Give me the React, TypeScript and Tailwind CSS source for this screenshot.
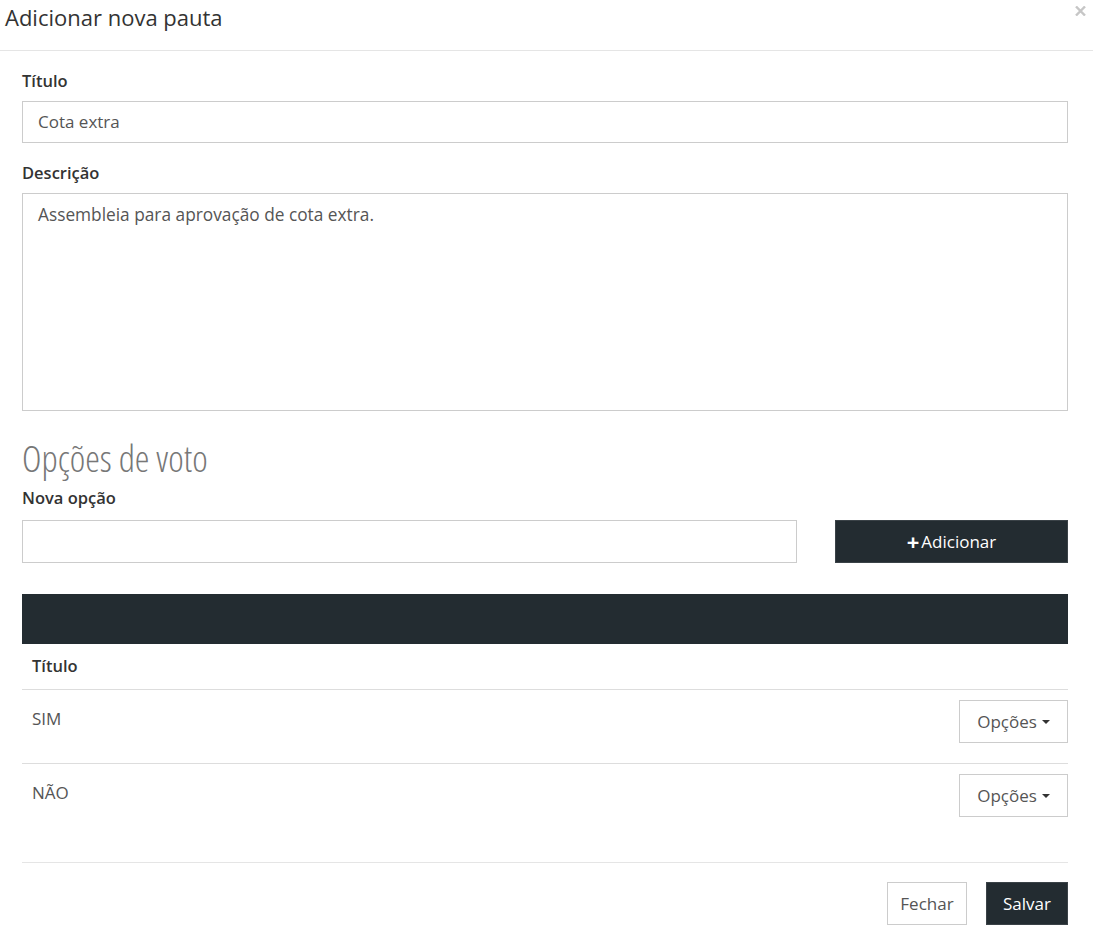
import React from "react";

const font = { fontFamily: '"Open Sans", "Noto Sans", sans-serif' };

function Caret() {
  return <span className="ml-[5px] inline-block w-0 h-0 border-l-[4px] border-r-[4px] border-t-[4px] border-l-transparent border-r-transparent border-t-[#333] align-middle" />;
}

export default function App() {
  return (
    <div className="w-[1093px] min-h-[932px] bg-white text-[#333]" style={font}>
      <div className="relative h-[51px] border-b border-[#e5e5e5] pl-[5px] pt-[2px]">
        <h4 className="text-[22px] leading-[30px] text-[#333] font-normal">Adicionar nova pauta</h4>
        <button aria-label="Fechar" className="absolute left-[1075px] top-[6px] w-[11px] h-[10px]">
          <svg width="11" height="10" viewBox="0 0 11 10" className="block">
            <path d="M1 0.5 L10 9.5 M10 0.5 L1 9.5" stroke="#c6c6c6" strokeWidth="2.4" strokeLinecap="butt" fill="none" />
          </svg>
        </button>
      </div>
      <div className="px-[22px] pr-[25px] pt-[20px]">
        <label className="block text-[16.5px] font-semibold leading-[20px] mb-[10px]">Título</label>
        <div className="h-[42px] border border-[#ccc] px-[15px] flex items-center text-[17px] text-[#555]">Cota extra</div>
        <label className="block text-[16.5px] font-semibold leading-[20px] mt-[20px] mb-[10px]">Descrição</label>
        <div className="h-[218px] border border-[#ccc] px-[15px] pt-[9px] text-[17.3px] text-[#555] leading-[24px]">Assembleia para aprovação de cota extra.</div>
        <h3 className="mt-[26px] text-[37px] leading-[42px] font-light text-[#777]" style={{ fontStretch: "condensed" }}>Opções de voto</h3>
        <label className="block text-[16.5px] font-semibold leading-[20px] mt-[9px] mb-[12px]">Nova opção</label>
        <div className="flex gap-[38px]">
          <div className="flex-1 h-[43px] border border-[#ccc]" />
          <div className="w-[233px] h-[43px] bg-[#232c31] border border-[#3a4247] text-white text-[17px] flex items-center justify-center">
            <span className="font-bold text-[22px] leading-none mr-[2px] -mt-[2px]">+</span>Adicionar
          </div>
        </div>
        <div className="mt-[31px] h-[50px] bg-[#232c31]" />
        <div className="h-[46px] border-b border-[#ddd] flex items-center px-[10px] text-[16.5px] font-semibold">Título</div>
        <div className="h-[74px] border-b border-[#ddd] flex items-start justify-between pl-[10px] pt-[10px]">
          <span className="text-[17px] text-[#555] leading-[38px]">SIM</span>
          <div className="h-[43px] w-[109px] border border-[#ccc] flex items-center justify-center text-[17px] text-[#555]">Opções<Caret /></div>
        </div>
        <div className="h-[74px] flex items-start justify-between pl-[10px] pt-[10px]">
          <span className="text-[17px] text-[#555] leading-[38px]">NÃO</span>
          <div className="h-[43px] w-[109px] border border-[#ccc] flex items-center justify-center text-[17px] text-[#555]">Opções<Caret /></div>
        </div>
        <div className="mt-[24px] border-t border-[#e5e5e5] pt-[19px] flex justify-end gap-[19px]">
          <div className="h-[43px] w-[80px] border border-[#ccc] flex items-center justify-center text-[17px] text-[#555]">Fechar</div>
          <div className="h-[43px] w-[82px] bg-[#232c31] border border-[#3a4247] flex items-center justify-center text-[17px] text-white">Salvar</div>
        </div>
      </div>
    </div>
  );
}
